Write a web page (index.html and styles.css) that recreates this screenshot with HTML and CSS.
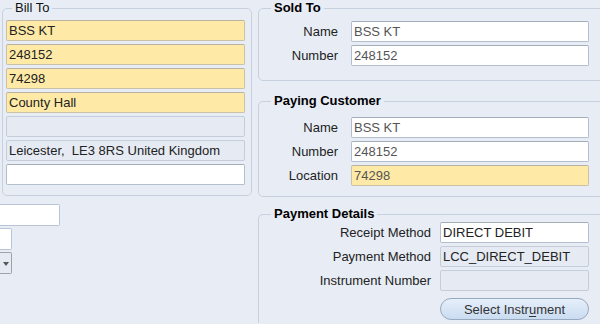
FILE: index.html
```html
<!DOCTYPE html>
<html lang="en">
<head>
  <meta charset="UTF-8" />
  <title>Customer Details</title>
  <link rel="stylesheet" href="styles.css">
</head>
<body>

<div class="page">
  <div class="left-col">
    <fieldset class="group bill-to">
      <legend>Bill To</legend>
      <div class="field required">BSS KT</div>
      <div class="field required">248152</div>
      <div class="field required">74298</div>
      <div class="field required">County Hall</div>
      <div class="field readonly"></div>
      <div class="field readonly">Leicester,&nbsp; LE3 8RS United Kingdom</div>
      <div class="field"></div>
    </fieldset>

    <div class="stub stub-wide"></div>
    <div class="stub stub-narrow"></div>
    <div class="stub stub-narrow stub-select"><span class="arrow"></span></div>
  </div>

  <div class="right-col">
    <fieldset class="group sold-to">
      <legend>Sold To</legend>
      <div class="form-grid">
        <label>Name</label>
        <div class="field muted">BSS KT</div>
        <label>Number</label>
        <div class="field muted">248152</div>
      </div>
    </fieldset>

    <fieldset class="group paying">
      <legend>Paying Customer</legend>
      <div class="form-grid">
        <label>Name</label>
        <div class="field muted">BSS KT</div>
        <label>Number</label>
        <div class="field muted">248152</div>
        <label>Location</label>
        <div class="field required muted">74298</div>
      </div>
    </fieldset>

    <fieldset class="group payment">
      <legend>Payment Details</legend>
      <div class="form-grid wide-labels">
        <label>Receipt Method</label>
        <div class="field">DIRECT DEBIT</div>
        <label>Payment Method</label>
        <div class="field readonly">LCC_DIRECT_DEBIT</div>
        <label>Instrument Number</label>
        <div class="field readonly"></div>
        <span></span>
        <button class="pill-btn">Select Instr<u>u</u>ment</button>
      </div>
    </fieldset>
  </div>
</div>

</body>
</html>
```

FILE: styles.css
```css
body {
  margin: 0;
  background: #e8edf5;
  font-family: "Liberation Sans", Arial, sans-serif;
  font-size: 13px;
  color: #222;
  overflow: hidden;
  height: 324px;
}

.page {
  display: flex;
  width: 612px;
}

.left-col {
  width: 250px;
  padding-left: 2px;
  flex-shrink: 0;
}

.right-col {
  margin-left: 6px;
  flex: 1;
}

/* Grupos (fieldset) */
.group {
  margin: 0;
  border: 1px solid #c6d0de;
  border-radius: 5px;
  padding: 0;
  min-width: 0;
}

.group legend {
  padding: 0 3px;
  margin-left: 12px;
  line-height: 16px;
  height: 16px;
  color: #000;
  font-weight: bold;
}

.bill-to {
  padding: 4px 6px 10px 3px;
  display: flex;
  flex-direction: column;
  gap: 3px;
}

.bill-to legend {
  font-weight: normal;
  color: #111;
  margin-left: 6px;
}

.field {
  height: 21px;
  box-sizing: border-box;
  border: 1px solid #b3bfcf;
  border-top-color: #a4adba;
  border-radius: 2px;
  background: #fff;
  padding: 0 2px;
  line-height: 19px;
  white-space: nowrap;
  overflow: hidden;
  color: #222;
}

.field.required {
  background: #feeaa6;
  border-color: #c9c2a6;
  border-top-color: #b8b3a0;
}

.field.readonly {
  background: #e6ebf3;
  border-color: #c4cdd9;
}

.field.muted {
  color: #555;
}

/* Campos cortados a la izquierda */
.stub {
  height: 22px;
  box-sizing: border-box;
  background: #fff;
  border: 1px solid #b9c5d6;
  border-left: none;
  border-radius: 0 2px 2px 0;
  margin-left: -2px;
  margin-top: 2px;
}

.stub-wide {
  width: 60px;
  margin-top: 8px;
}

.stub-narrow {
  width: 12px;
}

.stub-select {
  background: #e6ebf3;
  border-color: #9aa3ae;
  position: relative;
}

.stub-select .arrow {
  position: absolute;
  left: 3px;
  top: 9px;
  border-left: 3px solid transparent;
  border-right: 3px solid transparent;
  border-top: 4px solid #555;
}

/* Formularios de la derecha */
.form-grid {
  display: grid;
  grid-template-columns: 79px 238px;
  column-gap: 13px;
  row-gap: 3px;
  align-items: center;
}

.form-grid label {
  text-align: right;
  color: #222;
}

.sold-to {
  padding: 5px 0 14px 0;
}

.paying {
  margin-top: 12px;
  padding: 8px 0 10px 0;
}

/* el borde inferior queda fuera de la captura */
.payment {
  margin-top: 9px;
  padding: 0 0 3px 0;
  border-bottom: none;
  border-radius: 5px 5px 0 0;
}

.wide-labels {
  grid-template-columns: 172px 149px;
  column-gap: 9px;
}

.pill-btn {
  margin-top: 4px;
  height: 22px;
  border: 1px solid #97a8bf;
  border-radius: 11px;
  background: linear-gradient(#e6effa, #cadcf1);
  font-family: "Liberation Sans", Arial, sans-serif;
  font-size: 13px;
  color: #333;
  padding: 0;
  cursor: pointer;
}

.pill-btn u {
  text-decoration-thickness: 1px;
  text-underline-offset: 2px;
}
```
